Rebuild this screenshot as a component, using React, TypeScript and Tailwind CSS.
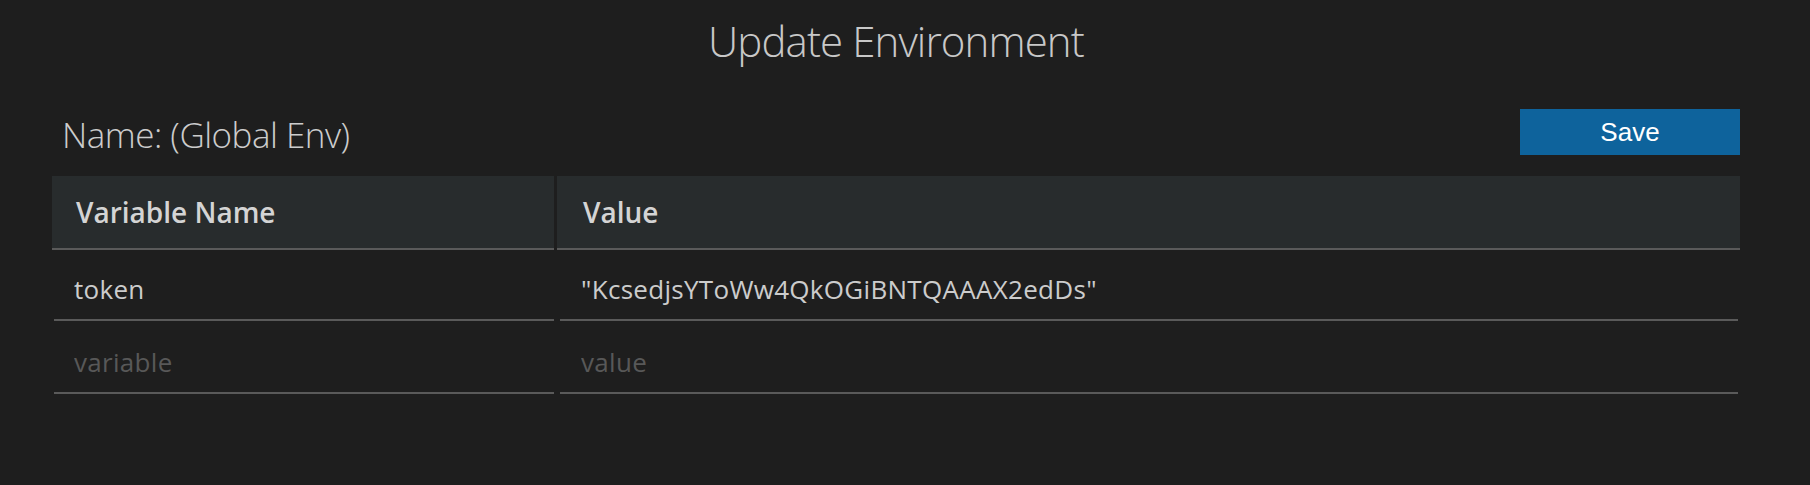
import React from "react";

const rows = [{ name: "token", value: '"KcsedjsYToWw4QkOGiBNTQAAAX2edDs"' }];

function Cell({
  value,
  placeholder,
  left,
  tall,
}: {
  value?: string;
  placeholder: string;
  left?: boolean;
  tall?: boolean;
}) {
  return (
    <div className={left ? "pl-[2px]" : "pl-[3px] pr-[2px]"}>
      <input
        readOnly
        value={value ?? ""}
        placeholder={placeholder}
        className={
          "block w-full border-b-2 border-[#5a5a5a] bg-transparent text-[26px] tracking-[0.3px] text-[#cccccc] outline-none placeholder:text-[#585858] " +
          (tall ? "h-[73px] pt-[11px] " : "h-[71px] pt-[8px] ") +
          (left ? "pl-[20px]" : "pl-[21px]")
        }
      />
    </div>
  );
}

export default function App() {
  return (
    <div
      className="min-h-screen bg-[#1e1e1e] pl-[52px] pr-[70px]"
      style={{ fontFamily: '"Open Sans", "Noto Sans", sans-serif' }}
    >
      <h1 className="pt-[11px] text-center text-[42px] leading-[60px] font-light tracking-[-0.9px] text-[#c8c8c8]">
        Update Environment
      </h1>

      <div className="mt-[38px] flex h-[46px] items-center justify-between">
        <div className="pl-[10px] pt-[6px] text-[35px] leading-[46px] font-light tracking-[-0.5px] text-[#cccccc]">
          Name: (Global Env)
        </div>
        <button
          className="h-[46px] w-[220px] bg-[#0e639c] text-[26px] text-white"
          style={{ fontFamily: '"Liberation Sans", Arial, sans-serif' }}
        >
          Save
        </button>
      </div>

      <div className="mt-[21px] grid grid-cols-[502px_1fr] gap-x-[3px]">
        <div className="flex h-[74px] items-center border-b-2 border-[#5a5a5a] bg-[#282c2d] pl-[24px] text-[28px] leading-[40px] font-semibold text-[#d4d4d4]">
          Variable Name
        </div>
        <div className="flex h-[74px] items-center border-b-2 border-[#5a5a5a] bg-[#282c2d] pl-[26px] text-[28px] leading-[40px] font-semibold text-[#d4d4d4]">
          Value
        </div>

        {rows.map((r) => (
          <React.Fragment key={r.name}>
            <Cell left value={r.name} placeholder="variable" />
            <Cell value={r.value} placeholder="value" />
          </React.Fragment>
        ))}
        <Cell left tall placeholder="variable" />
        <Cell tall placeholder="value" />
      </div>
    </div>
  );
}
